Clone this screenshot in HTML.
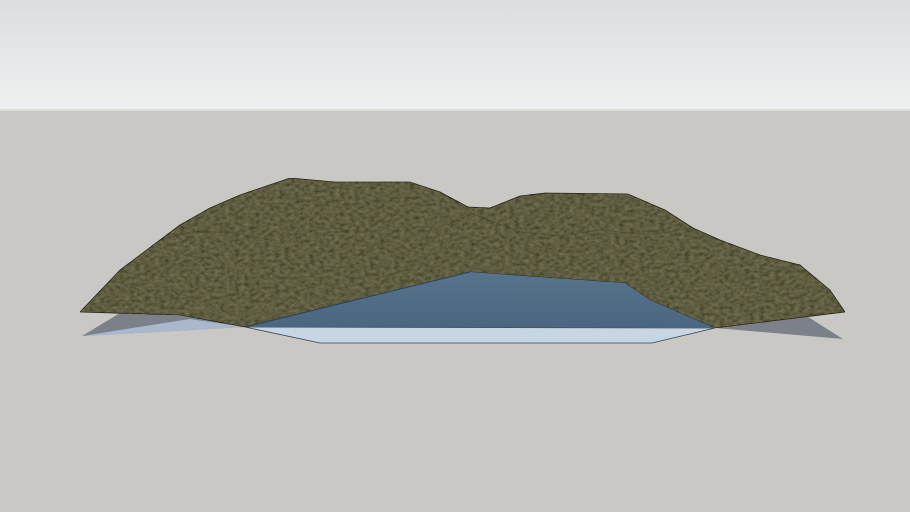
<!DOCTYPE html>
<html><head><meta charset="utf-8"><style>
html,body{margin:0;padding:0;width:910px;height:512px;overflow:hidden;background:#c9c8c5}
svg{display:block}
</style></head><body>
<svg width="910" height="512" viewBox="0 0 910 512" xmlns="http://www.w3.org/2000/svg">
<defs>
<linearGradient id="sky" x1="0" y1="0" x2="0" y2="1">
<stop offset="0" stop-color="#dcdddf"/><stop offset="1" stop-color="#eff0f0"/>
</linearGradient>
<filter id="tex" x="0" y="0" width="100%" height="100%">
<feTurbulence type="fractalNoise" baseFrequency="0.2 0.3" numOctaves="3" seed="4" result="n"/>
<feColorMatrix in="n" type="matrix" values="0.7 0 0 0 0.0  0.65 0 0 0 0.03  0.5 0 0 0 0.0  0 0 0 0 1" result="c"/>
<feComposite in="c" in2="SourceGraphic" operator="in" result="t"/>
<feBlend in="t" in2="SourceGraphic" mode="multiply"/>
</filter>
<linearGradient id="water" x1="0" y1="0" x2="0" y2="1">
<stop offset="0" stop-color="#58748c"/><stop offset="1" stop-color="#4a6680"/>
</linearGradient>
</defs>
<rect x="0" y="0" width="910" height="110" fill="url(#sky)"/>
<rect x="0" y="109" width="910" height="2" fill="#dcdcda"/>
<rect x="0" y="111" width="910" height="401" fill="#c9c8c5"/>
<polygon points="120,313 82,336 245,327 180,315" fill="#7c8088"/>
<polygon points="82,336 245,327 190,319" fill="#a9b8cc"/>
<polygon points="715,328 843,339 805,315" fill="#7c8088"/>
<polygon points="245,327 715,328 652,343 320,343" fill="#c7d6e4" stroke="#3a4048" stroke-width="0.8"/>
<polygon points="80,312 120,270 160,240 180,225 210,208 240,195 290,178 335,182 410,182 440,192 468,207 490,208 520,196 545,193 628,194 665,210 693,228 720,240 760,255 800,265 830,290 845,312 715,328 650,300 625,283 470,272 245,327 180,315" fill="#a8a488" filter="url(#tex)" stroke="#2e2e22" stroke-width="0.8"/>
<polygon points="80,312 120,270 160,240 180,225 210,208 240,195 290,178 335,182 410,182 440,192 468,207 490,208 520,196 545,193 628,194 665,210 693,228 720,240 760,255 800,265 830,290 845,312 715,328 650,300 625,283 470,272 245,327 180,315" fill="#4c4a36" opacity="0.3"/>
<polyline points="160,240 190,232 230,232 270,240" fill="none" stroke="#3a3a28" stroke-width="0.8" opacity="0.6"/>
<polyline points="440,192 475,215 520,232 560,236 600,230 650,235 693,228" fill="none" stroke="#3a3a28" stroke-width="0.8" opacity="0.5"/>
<polygon points="245,327 470,272 625,283 650,300 715,328" fill="url(#water)"/>
<line x1="245" y1="327" x2="470" y2="272" stroke="#2f4355" stroke-width="1"/>
</svg>
</body></html>
